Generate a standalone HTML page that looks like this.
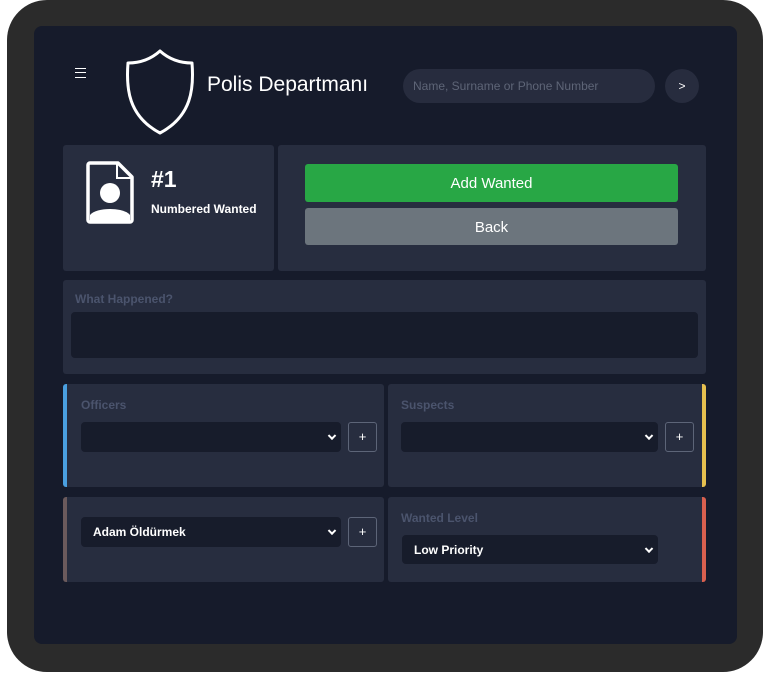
<!DOCTYPE html>
<html><head><meta charset="utf-8"><style>
*{box-sizing:border-box;margin:0;padding:0}
body{width:768px;height:676px;background:#fff;position:relative;overflow:hidden;font-family:"Liberation Sans",sans-serif}
.a{position:absolute}
.frame{left:7px;top:0;width:756px;height:672px;background:#2b2b2b;border-radius:40px}
.screen{left:34px;top:26px;width:703px;height:618px;background:#161b2b;border-radius:8px}
.panel{background:#272d3f;border-radius:3px}
.lbl{color:#4b546d;font-size:12px;font-weight:bold}
.sel{background:#171c2b;border-radius:4px}
.chev{position:absolute;right:6px;top:50%;width:6px;height:6px;border-right:2px solid #fff;border-bottom:2px solid #fff;transform:translateY(-70%) rotate(45deg)}
.plus{border:1px solid #5d6578;border-radius:3px;color:#fff;font-size:13px;text-align:center;line-height:28px}
.stxt{color:#fff;font-size:12px;font-weight:bold;position:absolute;left:12px;top:50%;transform:translateY(-50%)}
</style></head><body>
<div class="a frame"></div>
<div class="a screen"></div>
<div class="a" style="left:75px;top:68px;width:11px;height:10px;border-top:1.5px solid #fff;border-bottom:1.5px solid #fff"><div style="margin-top:2.75px;height:1.5px;background:#fff"></div></div>
<svg class="a" style="left:124px;top:48px" width="72" height="88" viewBox="0 0 72 88"><path d="M36 3 C26 12 14 15 4 15 C2 40 4 68 36 85 C68 68 70 40 68 15 C58 15 46 12 36 3 Z" fill="none" stroke="#fff" stroke-width="3" stroke-linejoin="round"/></svg>
<div class="a" style="left:207px;top:73px;color:#fff;font-size:21px">Polis Departmanı</div>
<div class="a" style="left:403px;top:69px;width:252px;height:34px;background:#272c3e;border-radius:17px;color:#5e6577;font-size:12px;line-height:35px;padding-left:10px">Name, Surname or Phone Number</div>
<div class="a" style="left:665px;top:69px;width:34px;height:34px;background:#272c3e;border-radius:50%;color:#fff;font-size:12px;text-align:center;line-height:35px">&gt;</div>
<div class="a panel" style="left:63px;top:145px;width:211px;height:126px"></div>
<div class="a panel" style="left:278px;top:145px;width:428px;height:126px"></div>
<svg class="a" style="left:86px;top:161px" width="48" height="63" viewBox="0 0 48 63"><path d="M4 2 H32 L46 16 V59 a2 2 0 0 1 -2 2 H4 a2 2 0 0 1 -2 -2 V4 a2 2 0 0 1 2 -2 Z" fill="none" stroke="#fff" stroke-width="3.5" stroke-linejoin="round"/><path d="M31 3 V17 H45" fill="none" stroke="#fff" stroke-width="2"/><circle cx="24" cy="32" r="10" fill="#fff"/><path d="M4 61 V54 C10 46 38 46 44 54 V61 Z" fill="#fff"/></svg>
<div class="a" style="left:151px;top:166px;color:#fff;font-size:23px;font-weight:bold">#1</div>
<div class="a" style="left:151px;top:202px;color:#fff;font-size:12px;font-weight:bold">Numbered Wanted</div>
<div class="a" style="left:305px;top:164px;width:373px;height:38px;background:#28a745;border-radius:3px;color:#fff;font-size:15px;text-align:center;line-height:40px">Add Wanted</div>
<div class="a" style="left:305px;top:208px;width:373px;height:37px;background:#6c757d;border-radius:3px;color:#fff;font-size:15px;text-align:center;line-height:39px">Back</div>
<div class="a panel" style="left:63px;top:280px;width:643px;height:94px"></div>
<div class="a lbl" style="left:75px;top:292px">What Happened?</div>
<div class="a sel" style="left:71px;top:312px;width:627px;height:46px"></div>
<div class="a panel" style="left:63px;top:384px;width:321px;height:103px;border-left:4px solid #4a9fe0"></div>
<div class="a panel" style="left:388px;top:384px;width:318px;height:103px;border-right:4px solid #e6c04f"></div>
<div class="a lbl" style="left:81px;top:398px">Officers</div>
<div class="a sel" style="left:81px;top:422px;width:260px;height:30px"><div class="chev"></div></div>
<div class="a plus" style="left:348px;top:422px;width:29px;height:30px">+</div>
<div class="a lbl" style="left:401px;top:398px">Suspects</div>
<div class="a sel" style="left:401px;top:422px;width:257px;height:30px"><div class="chev"></div></div>
<div class="a plus" style="left:665px;top:422px;width:29px;height:30px">+</div>
<div class="a panel" style="left:63px;top:497px;width:321px;height:85px;border-left:4px solid #6b5a5c"></div>
<div class="a panel" style="left:388px;top:497px;width:318px;height:85px;border-right:4px solid #d9604f"></div>
<div class="a sel" style="left:81px;top:517px;width:260px;height:30px"><span class="stxt">Adam Öldürmek</span><div class="chev"></div></div>
<div class="a plus" style="left:348px;top:517px;width:29px;height:30px">+</div>
<div class="a lbl" style="left:401px;top:511px">Wanted Level</div>
<div class="a sel" style="left:402px;top:535px;width:256px;height:29px"><span class="stxt">Low Priority</span><div class="chev"></div></div>
</body></html>
